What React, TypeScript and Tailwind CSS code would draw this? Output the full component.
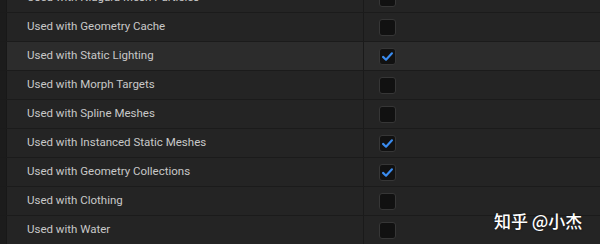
import React from 'react';

interface Flag {
    label: string;
    checked: boolean;
}

const flags: Flag[] = [
    { label: 'Used with Niagara Mesh Particles', checked: false },
    { label: 'Used with Geometry Cache', checked: false },
    { label: 'Used with Static Lighting', checked: true },
    { label: 'Used with Morph Targets', checked: false },
    { label: 'Used with Spline Meshes', checked: false },
    { label: 'Used with Instanced Static Meshes', checked: true },
    { label: 'Used with Geometry Collections', checked: true },
    { label: 'Used with Clothing', checked: false },
    { label: 'Used with Water', checked: false },
];

function CheckBox({ checked }: { checked: boolean }) {
    return (
        <div className="w-[17px] h-[17px] rounded-[3px] bg-[#111111] border border-[#363636] flex items-center justify-center">
            {checked && (
                <svg width="13" height="13" viewBox="0 0 14 14" fill="none">
                    <path d="M2.2 7.4 L5.4 10.4 L11.8 3.6" stroke="#3a8cf0" strokeWidth="2.3" strokeLinecap="round" strokeLinejoin="round" />
                </svg>
            )}
        </div>
    );
}

export default function App() {
    return (
        <div className="relative w-[600px] h-[244px] overflow-hidden bg-[#242424] font-['Roboto','Liberation_Sans',sans-serif]">
            <div className="flex flex-col -mt-[16px]">
                {flags.map((f, i) => (
                    <div key={i} className="flex h-[29px] border-b border-[#1b1b1b]">
                        {/* left gutter */}
                        <div className="w-[7px] bg-[#1c1c1c] border-r border-[#181818]" />
                        <div className={`flex flex-1 ${i === 2 ? 'bg-[#2c2c2c]' : 'bg-[#242424]'}`}>
                            <div className="w-[357px] flex items-center pl-[20px] text-[11.5px] text-[#c8c8c8] border-r border-[#1a1a1a]">
                                {f.label}
                            </div>
                            <div className="flex-1 flex items-center pl-[15px]">
                                <CheckBox checked={f.checked} />
                            </div>
                        </div>
                    </div>
                ))}
            </div>
            <div className="absolute left-[494px] top-[208px] text-white text-[17px] font-medium font-['Noto_Sans_CJK_SC',sans-serif] [text-shadow:0_0_2px_rgba(0,0,0,0.6)]">
                知乎 @小杰
            </div>
        </div>
    );
}
